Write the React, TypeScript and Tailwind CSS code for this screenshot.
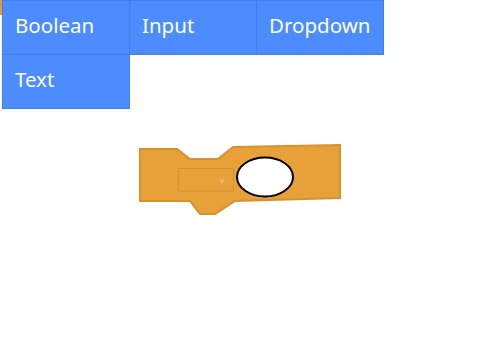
import React from "react";

const labels = [
  { l: "Boolean", c: "ml-0" },
  { l: "Input", c: "-ml-px" },
  { l: "Dropdown", c: "-ml-px" },
  { l: "Text", c: "ml-0 -mt-px" },
];

export default function App() {
  return (
    <div className="relative w-[480px] h-[360px] bg-white overflow-hidden" style={{ fontFamily: '"Noto Sans", "Open Sans", sans-serif' }}>
      <div className="absolute left-0 top-0 w-[2px] h-[15px] bg-[#e39a35]" />
      <div className="flex flex-wrap w-[384px] ml-[2px]">
        {labels.map(({ l, c }) => (
          <button
            key={l}
            className={`w-[128px] h-[55px] bg-[#4c8cff] border border-[#4280ec] flex items-center pl-[12px] pb-[4px] text-white text-[20.5px] leading-none ${c}`}
          >
            {l}
          </button>
        ))}
      </div>
      <svg className="absolute left-0 top-0" width="480" height="360">
        <polygon
          points="140,149 177,149 190,159 218,159 233,147 340,145 340,198 235,201 215,214 200,214 190,201 140,201"
          fill="#e8a038"
          stroke="#d4932f"
          strokeWidth="2"
          strokeLinejoin="miter"
        />
        <rect x="178.5" y="168.5" width="55" height="22.5" fill="#e8a038" stroke="#d4932f" strokeWidth="1" />
        <text x="222" y="183" fill="#f7dcae" fontSize="8" fontFamily="Open Sans, sans-serif" textAnchor="middle">v</text>
        <ellipse cx="265" cy="177" rx="28" ry="19.5" fill="#ffffff" stroke="#000000" strokeWidth="2" />
      </svg>
    </div>
  );
}
